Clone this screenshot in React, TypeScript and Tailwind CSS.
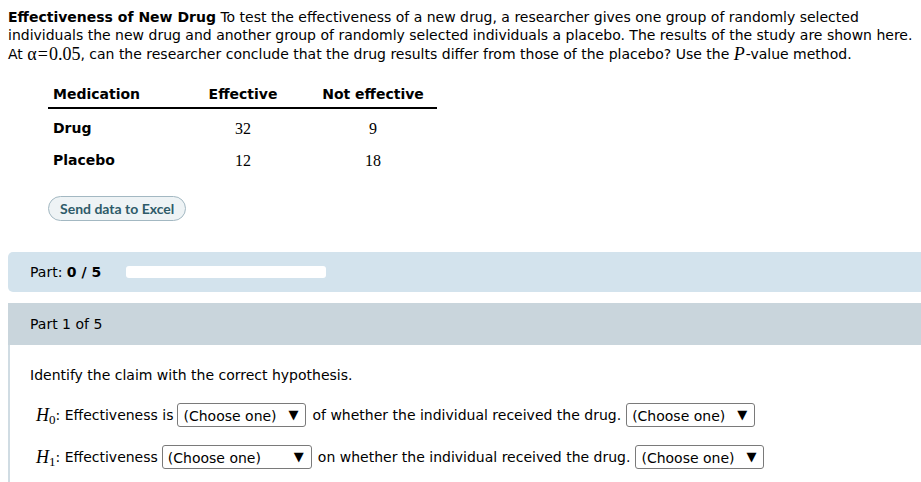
import React from "react";

const font = { fontFamily: '"DejaVu Sans", Verdana, sans-serif' };

function Select({ width }: { width: string }) {
  return (
    <span
      className={`inline-flex h-[24px] items-center justify-between rounded-[3px] border border-[#7a7a7a] bg-white pl-[5px] pr-[7px] align-middle text-[14px] text-black ${width}`}
    >
      <span className="pt-[3px]">(Choose one)</span>
      <span className="text-[13px]">▼</span>
    </span>
  );
}

function Math({ children }: { children: React.ReactNode }) {
  return (
    <span className="text-[18px] italic leading-[18px]" style={{ fontFamily: '"Liberation Serif", "Times New Roman", serif' }}>
      {children}
    </span>
  );
}

export default function App() {
  return (
    <div className="min-h-[482px] w-full overflow-hidden bg-white text-[14px] text-black" style={font}>
      <p className="px-2 pt-[8px] leading-[18px]">
        <b>Effectiveness of New Drug</b> To test the effectiveness of a new drug, a researcher gives one group of
        randomly selected individuals the new drug and another group of randomly selected individuals a placebo. The
        results of the study are shown here. At{" "}
        <span className="relative top-[1px] text-[18px] leading-[18px]" style={{ fontFamily: '"Liberation Serif", serif' }}>
          α<span className="mx-[1px]">=</span>0.05
        </span>
        , can the researcher conclude that the drug results differ from those of the placebo? Use the{" "}
        <span className="relative top-[1px] mr-[1px]">
          <Math>P</Math>
        </span>
        -value method.
      </p>

      <table className="ml-[48px] mt-[21px] border-collapse">
        <thead>
          <tr className="h-[24px] border-b-2 border-black font-bold">
            <th className="w-[129px] pl-[5px] text-left align-top font-bold">Medication</th>
            <th className="w-[132px] text-center align-top font-bold">Effective</th>
            <th className="w-[128px] text-center align-top font-bold">Not effective</th>
          </tr>
        </thead>
        <tbody>
          {[
            ["Drug", "32", "9"],
            ["Placebo", "12", "18"],
          ].map(([a, b, c], i) => (
            <tr key={a} className={i === 0 ? "h-[37px]" : "h-[31px]"}>
              <td className={`pl-[5px] font-bold ${i === 0 ? "pt-[3px]" : ""}`}>{a}</td>
              <td
                className={`text-center text-[16px] ${i === 0 ? "pt-[3px]" : ""}`}
                style={{ fontFamily: '"Liberation Serif", serif' }}
              >
                {b}
              </td>
              <td
                className={`text-center text-[16px] ${i === 0 ? "pt-[3px]" : ""}`}
                style={{ fontFamily: '"Liberation Serif", serif' }}
              >
                {c}
              </td>
            </tr>
          ))}
        </tbody>
      </table>

      <div className="ml-[48px] mt-[20px]">
        <button
          className="h-[25px] rounded-full border border-[#a3b8c2] bg-[#eef3f5] px-[11px] text-[14px] font-bold text-[#2e5b69]"
          style={{ fontFamily: 'Lato, "Open Sans", sans-serif' }}
        >
          Send data to Excel
        </button>
      </div>

      <div className="ml-2 mt-[31px] flex h-[40px] items-center rounded-l-[5px] bg-[#d3e3ed] pl-[22px]">
        <span>
          Part: <b>0 / 5</b>
        </span>
        <div className="ml-[25px] h-[12px] w-[200px] rounded-[3px] bg-white" />
      </div>

      <div className="ml-2 mt-[11px] flex h-[42px] items-center bg-[#c9d5dc] pl-[22px]">Part 1 of 5</div>

      <div className="ml-2 border-l-2 border-[#d0dce3] pb-[20px] pl-[20px]">
        <div className="pt-[21px] leading-[18px]">Identify the claim with the correct hypothesis.</div>
        <div className="mt-[19px] flex items-center pl-[6px]">
          <Math>H</Math>
          <span className="relative top-[5px] text-[13px]" style={{ fontFamily: '"Liberation Serif", serif' }}>
            0
          </span>
          <span>: Effectiveness is</span>
          <span className="ml-[4px]">
            <Select width="w-[129px]" />
          </span>
          <span className="ml-[6px]">of whether the individual received the drug.</span>
          <span className="ml-[5px]">
            <Select width="w-[129px]" />
          </span>
        </div>
        <div className="mt-[18px] flex items-center pl-[6px]">
          <Math>H</Math>
          <span className="relative top-[5px] text-[13px]" style={{ fontFamily: '"Liberation Serif", serif' }}>
            1
          </span>
          <span>: Effectiveness</span>
          <span className="ml-[4px]">
            <Select width="w-[150px]" />
          </span>
          <span className="ml-[6px]">on whether the individual received the drug.</span>
          <span className="ml-[5px]">
            <Select width="w-[129px]" />
          </span>
        </div>
      </div>
    </div>
  );
}
